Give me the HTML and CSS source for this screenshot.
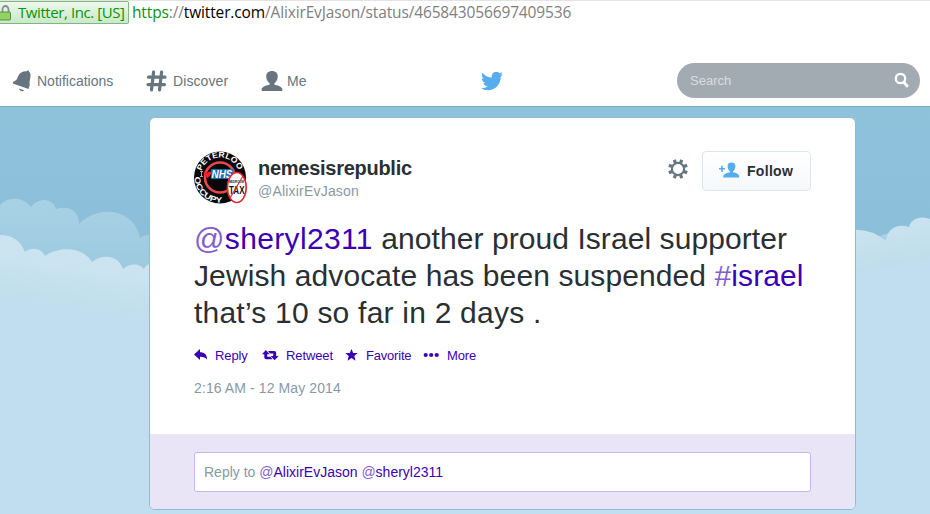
FILE: index.html
```html
<!DOCTYPE html>
<html lang="en">
<head>
<meta charset="utf-8">
<title>nemesisrepublic on Twitter</title>
<link rel="stylesheet" href="styles.css">
</head>
<body>
<div class="urlbar">
  <div class="cert">
    <svg class="lock" width="12" height="18" viewBox="0 0 12 18"><path d="M2.500 9V5.500a3 3.500 0 0 1 6 0V9" fill="none" stroke="#8a8f8a" stroke-width="1.800"/><rect x="-.5" y="8" width="11" height="8" rx="1" fill="#8fd45f" stroke="#5d8a4a"/></svg>
    <span class="cert-name">Twitter, Inc. [US]</span>
  </div>
  <div class="url"><span class="scheme">https</span>://<span class="host">twitter.com</span>/AlixirEvJason/status/465843056697409536</div>
</div>
<header class="topbar">
  <nav class="nav">
    <a class="notifications"><svg width="20" height="22" viewBox="0 0 20 22" fill="#66757f"><path d="M16.300 0l.7 1.500c1.600 1.400 1.800 3.500 1.400 5.700-.5 3-1.200 4.500-.7 7.800L16.500 19 .8 13.500c0-1.500.7-1.900 1.900-2.400C5.600 9.500 5 7.500 6.800 4.900 8.600 2 11.500.8 14.700 1.200z"/><path d="M7 18.600l5 1.700c-.8 1.900-4.500 1.200-5-1.700z"/></svg><span>Notifications</span></a>
    <a class="discover"><svg width="21" height="22" viewBox="0 0 21 22" fill="none" stroke="#66757f" stroke-width="3.200" stroke-linecap="round"><path d="M7.600 2L5.500 20M15.600 2l-2.100 18M2.500 7.200H19M2 14.600h16.500"/></svg><span>Discover</span></a>
    <a class="me"><svg width="22" height="22" viewBox="0 0 22 22" fill="#66757f"><path d="M11 1c3.600 0 5.900 2.300 5.800 5.500-.1 3-1.600 5.500-3.400 6.700v1.500c3 .7 8 1.500 8.100 5.300 0 .6-.3 1-1 1h-19c-.7 0-1-.4-1-1 .1-3.800 5.100-4.600 8.100-5.300v-1.500C6.800 12 5.300 9.500 5.200 6.500 5.100 3.300 7.400 1 11 1z"/></svg><span>Me</span></a>
  </nav>
  <svg class="bird" width="22" height="19" viewBox="0 2.500 24 20" preserveAspectRatio="none" fill="#55acee"><path d="M23.954 4.569a10 10 0 0 1-2.825.775 4.958 4.958 0 0 0 2.163-2.723c-.951.555-2.005.959-3.127 1.184a4.920 4.920 0 0 0-8.384 4.482C7.691 8.094 4.066 6.130 1.640 3.161a4.822 4.822 0 0 0-.666 2.475c0 1.710.87 3.213 2.188 4.096a4.904 4.904 0 0 1-2.228-.616v.061a4.923 4.923 0 0 0 3.946 4.827 4.996 4.996 0 0 1-2.212.085 4.937 4.937 0 0 0 4.604 3.417 9.868 9.868 0 0 1-6.102 2.105c-.39 0-.779-.023-1.170-.067a13.995 13.995 0 0 0 7.557 2.209c9.054 0 13.999-7.496 13.999-13.986 0-.209 0-.42-.015-.63a9.936 9.936 0 0 0 2.460-2.548z"/></svg>
  <div class="search"><span>Search</span><svg width="15" height="16" viewBox="0 0 15 16" fill="none" stroke="#fff"><circle cx="6.500" cy="6.500" r="4.700" stroke-width="2.300"/><path d="M10 10.500l3 3.300" stroke-width="3" stroke-linecap="round"/></svg></div>
</header>
<main class="stage">
  <svg class="sky" width="930" height="407" viewBox="0 107 930 407">
    <defs>
      <linearGradient id="air" x1="0" y1="107" x2="0" y2="240" gradientUnits="userSpaceOnUse"><stop offset="0" stop-color="#8fc3dc"/><stop offset="1" stop-color="#8bbed9"/></linearGradient>
      <linearGradient id="far" x1="0" y1="199" x2="0" y2="265" gradientUnits="userSpaceOnUse"><stop offset="0" stop-color="#a9d1e4"/><stop offset="1" stop-color="#9dcae0"/></linearGradient>
      <linearGradient id="near" x1="0" y1="238" x2="-9" y2="295" gradientUnits="userSpaceOnUse"><stop offset="0" stop-color="#cce4f0"/><stop offset=".35" stop-color="#c9e3ef"/><stop offset=".95" stop-color="#c0deeb"/><stop offset="1" stop-color="#c0deef"/></linearGradient>
      <linearGradient id="nearRight" x1="855" y1="223" x2="865" y2="273" gradientUnits="userSpaceOnUse"><stop offset="0" stop-color="#cce4f0"/><stop offset=".4" stop-color="#c7e1ee"/><stop offset=".95" stop-color="#bfddeb"/><stop offset="1" stop-color="#c0deef"/></linearGradient>
    </defs>
    <path fill="url(#air)" d="M0 107h930v407H0z"/>
    <path fill="#c0deef" d="M0 300h930v214H0z"/>
    <path fill="url(#far)" d="M0 205C8 197 22 196 31 207C39 196 54 199 56 209C69 205 79 211 79 224C100 203 135 210 140 238Q145 234 155 235V300H0z"/>
    <path fill="url(#near)" d="M0 235C12 235 20 240 25 252C32 246 42 249 45 256C61 245 84 248 92 262C103 253 119 256 123 269C131 262 140 264 144 269Q146 264 155 262V514H0z"/>
    <path fill="#a9d1e4" d="M878 237q5-3 12-4v12z"/>
    <path fill="url(#nearRight)" d="M850 230Q871 228 886 241C887 228 898 223 909 227C911 219 920 215 930 219V514H850z"/>
  </svg>
  <article class="card">
    <div class="tweet">
      <div class="head">
        <svg class="avatar" width="54" height="54" viewBox="0 0 54 54">
          <defs><path id="ringTop" d="M7.500 26A19.500 19.500 0 0 1 46.500 26"/><path id="ringBottom" d="M2 24A25 25 0 0 0 38 49"/></defs>
          <circle cx="27" cy="26.500" r="26" fill="#080808"/><circle cx="27" cy="26.500" r="15" fill="none" stroke="#e8474c" stroke-width="2.600"/>
          <g class="badge-text"><text><textPath href="#ringTop" startOffset="6" textLength="48" lengthAdjust="spacingAndGlyphs">PETERLOO</textPath></text><text><textPath href="#ringBottom" startOffset="2" textLength="42" lengthAdjust="spacingAndGlyphs">OCCUPY</textPath></text></g>
          <path d="M18 18h22v10H18z" fill="#176ab4"/><text class="nhs" x="18.500" y="26.500" textLength="21" lengthAdjust="spacingAndGlyphs">NHS</text>
          <path d="M8.500 20.500v5M7 20.500h3M7 25.500h3" stroke="#aaa"/><path d="M14.500 27q-6-5-3-6.500 2-.3 3 1.300 1-1.600 3-1.300 3 1.500-3 6.500z" fill="#ee2029"/>
          <ellipse cx="43.800" cy="36.500" rx="9.400" ry="15" fill="#fff" stroke="#e3262d" stroke-width="1.600"/>
          <text class="room" x="36" y="32" textLength="15" lengthAdjust="spacingAndGlyphs">BEDROOM</text><text class="tax" x="36" y="42.500" textLength="15.500" lengthAdjust="spacingAndGlyphs">TAX</text><path d="M50 25L37 47" stroke="#e3262d" stroke-width="1.200"/>
        </svg>
        <div class="who"><div class="name">nemesisrepublic</div><div class="handle">@AlixirEvJason</div></div>
        <svg class="gear" width="20" height="20" viewBox="-10 -10 20 20"><circle r="6.100" fill="none" stroke="#66757f" stroke-width="2.200"/><g fill="#66757f"><path id="tooth" d="M-1.600-6.500v-3.400h3.200v3.400z" transform="rotate(22.500)"/><use href="#tooth" transform="rotate(45)"/><use href="#tooth" transform="rotate(90)"/><use href="#tooth" transform="rotate(135)"/><use href="#tooth" transform="rotate(180)"/><use href="#tooth" transform="rotate(225)"/><use href="#tooth" transform="rotate(270)"/><use href="#tooth" transform="rotate(315)"/></g></svg>
        <div class="follow"><svg width="21" height="16" viewBox="0 0 21 16" fill="#55acee"><path d="M0 6h2.200V3.700h1.600V6H6v1.600H3.800v2.500H2.200V7.600H0z"/><path d="M12.500.5c2.600 0 4 1.600 3.900 4-.1 2.200-1.200 4.200-2.500 5v.8c3.500.7 6.300 1.500 6.300 4.600 0 .4-.2.600-.6.600H4.800c-.4 0-.6-.2-.6-.6 0-3.100 3.500-3.900 6.900-4.600v-.8c-1.300-.8-2.400-2.800-2.500-5-.1-2.400 1.300-4 3.900-4z"/></svg><span>Follow</span></div>
      </div>
      <p class="text"><span class="l1"><a><i>@</i>sheryl2311</a> another proud Israel supporter</span><br><span class="l2">Jewish advocate has been suspended <a><i>#</i>israel</a></span><br><span class="l3">that’s 10 so far in 2 days .</span></p>
      <div class="actions">
        <a class="reply"><svg width="14" height="12" viewBox="0 0 14 12" fill="#3b00b3"><path d="M0 5.500L6 0v3.300c4.500 0 7 2 7 7.400-1.500-2.200-3.500-3-7-3V11z"/></svg><span>Reply</span></a>
        <a class="retweet"><svg width="17" height="12" viewBox="0 0 17 12" fill="#3b00b3"><path d="M3.800 1L7.800 5.200H5.200v2.600h3.300l2 2.400H4.200Q2.300 10.200 2.300 8.500V5.200H0zM12.600 11.200L8.600 7h2.600V4.400H8L6 2h6.300q1.900 0 1.900 1.700V7h2.400z"/></svg><span>Retweet</span></a>
        <a class="favorite"><svg width="13" height="12" viewBox="0 0 13 12" fill="#3b00b3"><path d="M6.500 0L8.200 4h4.500L9.300 7l1.200 4.800-4-2.700-4 2.700L3.700 7 .3 4h4.500z"/></svg><span>Favorite</span></a>
        <a class="more"><svg width="16" height="12" viewBox="0 0 16 12" fill="#3b00b3"><circle cx="2.700" cy="6" r="2.100"/><circle cx="8.200" cy="6" r="2.100"/><circle cx="13.700" cy="6" r="2.100"/></svg><span>More</span></a>
      </div>
      <div class="time">2:16 AM - 12 May 2014</div>
    </div>
    <div class="replybar"><div class="field">Reply to <a><i>@</i>AlixirEvJason</a> <a><i>@</i>sheryl2311</a></div></div>
  </article>
</main>
</body>
</html>
```
FILE: styles.css
```css
* { box-sizing: border-box; }
body { margin: 0; width: 930px; height: 514px; overflow: hidden; background: #fff; font-family: "Liberation Sans", Arial, sans-serif; }
svg { display: block; flex: none; }
i { font-style: normal; color: #7f5dcd; }
a { color: #3b00b3; white-space: nowrap; }
.urlbar { height: 25px; border-top: 1px solid #e3e3e3; display: flex; font-family: "Open Sans", "Noto Sans", sans-serif; font-size: 15.5px; line-height: 23px; }
.cert { width: 129px; height: 23px; flex: none; display: flex; border: 1px solid #7fb87f; border-left: 0; border-radius: 0 2px 2px 0; background: linear-gradient(#edf8ed, #c9e9c9); color: #0a930a; }
.lock { margin-top: 2px; }
.cert-name { margin-left: 6px; line-height: 21px; white-space: nowrap; font-size: 15px; letter-spacing: -.42px; }
.url { margin-left: 3px; color: #808080; white-space: nowrap; letter-spacing: -.14px; }
.scheme { color: #0a930a; }
.host { color: #000; }
.topbar { height: 82px; border-bottom: 1px solid #76a9c2; display: flex; align-items: center; padding: 30px 10px 0 12px; }
.nav { display: flex; width: 469px; margin-top: 1px; }
.nav a { display: flex; align-items: center; color: #66757f; font-size: 14px; }
.notifications { width: 134px; gap: 5px; }
.discover { width: 115px; gap: 6px; letter-spacing: .1px; }
.me { gap: 4px; }
.bird { margin-top: 2px; }
.search { width: 243px; height: 35px; margin: -1px 0 0 auto; padding: 0 11px 0 13px; border-radius: 18px; background: #a3abb2; color: #d9dde1; font-size: 13px; display: flex; align-items: center; justify-content: space-between; }
.stage { position: relative; height: 407px; padding: 10px 0 0 149px; }
.sky { position: absolute; left: 0; top: 0; }
.card { position: relative; width: 707px; height: 393px; border: 1px solid #95bacb; border-radius: 6px; background: #fff; overflow: hidden; }
.tweet { height: 316px; padding: 33px 44px 0; }
.head { display: flex; height: 54px; }
.avatar { margin-left: -1px; }
.badge-text { font: bold 8px "Liberation Sans", Arial, sans-serif; fill: #fff; }
.nhs { font: italic bold 10px "Liberation Sans", Arial, sans-serif; fill: #fff; }
.room { font: bold 4px "Liberation Sans", Arial, sans-serif; fill: #222; }
.tax { font: bold 10px "Liberation Sans", Arial, sans-serif; fill: #111; }
.who { margin-left: 11px; padding-top: 5px; }
.name { font-size: 20px; line-height: 24px; font-weight: bold; color: #292f33; letter-spacing: -.27px; }
.handle { font-size: 14px; line-height: 23px; color: #8899a6; letter-spacing: .2px; }
.gear { margin: 8px 14px 0 auto; }
.follow { width: 109px; height: 40px; border: 1px solid #dce6ed; border-radius: 4px; background: linear-gradient(#fff, #f5f8fa); display: flex; align-items: center; padding-left: 16px; gap: 7px; color: #292f33; font-size: 14px; font-weight: bold; letter-spacing: .3px; }
.follow svg { margin-top: -3px; }
.text { margin: 15px 0 0; height: 111px; font-size: 30px; line-height: 37px; color: #292f33; white-space: nowrap; }
.l1 { letter-spacing: .07px; }
.l1 a { letter-spacing: .35px; }
.l2 { letter-spacing: .1px; }
.l3 { letter-spacing: .22px; }
.actions { display: flex; margin-top: 15px; height: 18px; }
.actions a { display: flex; align-items: center; font-size: 13px; letter-spacing: -.1px; }
.reply { width: 68px; gap: 7px; }
.retweet { width: 83px; gap: 7px; }
.actions .favorite { width: 78px; gap: 8px; letter-spacing: -.2px; }
.more { gap: 8px; }
.time { margin-top: 15px; line-height: 18px; font-size: 14px; letter-spacing: .1px; color: #8899a6; }
.replybar { height: 75px; padding: 18px 44px; background: #e9e4f6; }
.field { height: 40px; border: 1px solid #c6b8ea; border-radius: 3px; background: #fff; padding-left: 9px; color: #8899a6; font-size: 14px; line-height: 38px; white-space: nowrap; }
```
